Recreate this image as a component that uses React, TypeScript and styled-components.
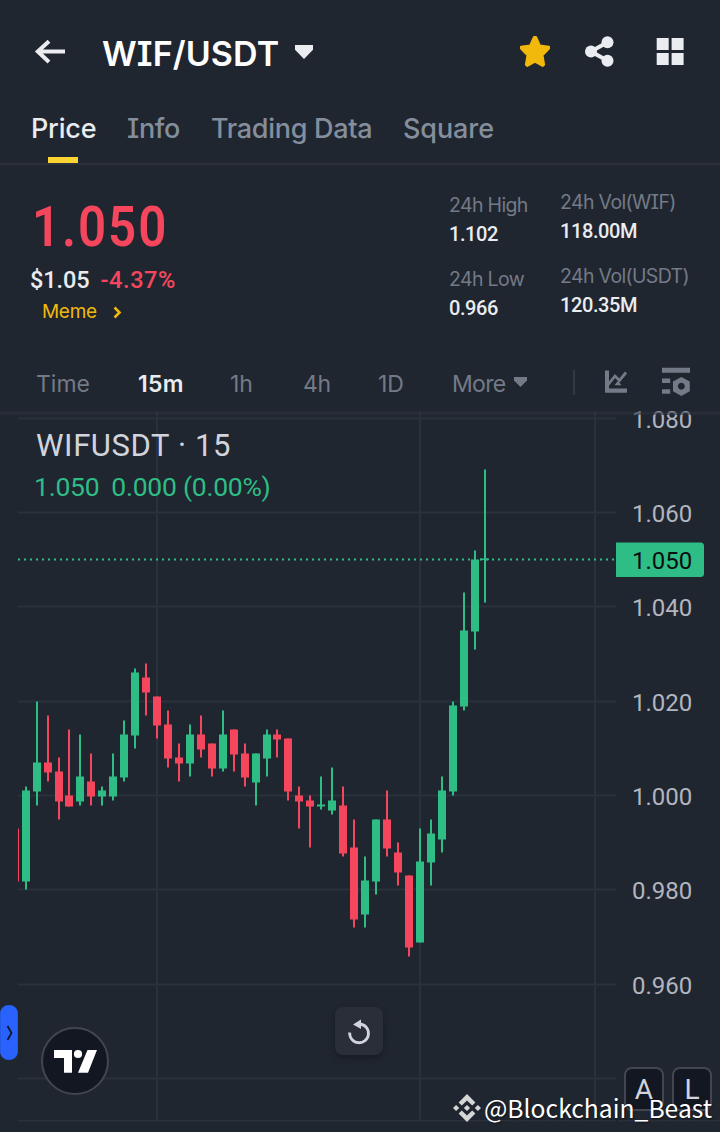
import React from 'react';
import styled, { createGlobalStyle } from 'styled-components';

const color = {
  bg: '#202630',
  text: '#eaecef',
  muted: '#848e9c',
  faint: '#747a87',
  line: '#2b303b',
  grid: '#2b313b',
  up: '#2ebd85',
  down: '#f6465d',
  gold: '#f0b90b',
  axis: '#b2b5be',
};

const GlobalStyle = createGlobalStyle`
  * { box-sizing: border-box; }
  body {
    margin: 0;
    background: ${color.bg};
    font-family: Inter, "Noto Sans", sans-serif;
    font-feature-settings: "cv08";
  }
`;

const Page = styled.main`
  width: 720px;
  height: 1132px;
  overflow: hidden;
  display: flex;
  flex-direction: column;
  background: ${color.bg};
  color: ${color.text};
`;

const TopBar = styled.header`
  height: 104px;
  padding: 0 36px 0 34px;
  display: flex;
  align-items: center;
`;

const Title = styled.h1`
  margin: 3px 0 0 36px;
  width: 193px;
  font-size: 34px;
  line-height: 40px;
  font-weight: 600;
  letter-spacing: 0.1px;
  color: #fff;
  white-space: nowrap;
`;

const Actions = styled.div`
  margin-left: auto;
  display: flex;
  align-items: center;
`;

const ActionSlot = styled.div<{ $gap: number; $lift?: number }>`
  display: flex;
  margin-right: ${(p) => p.$gap}px;
  margin-bottom: ${(p) => p.$lift ?? 0}px;
`;

const Tabs = styled.nav`
  height: 61px;
  padding-left: 31px;
  display: flex;
  border-bottom: 2px solid ${color.line};
`;

const Tab = styled.div<{ $active?: boolean; $width: number; $spacing: number }>`
  width: ${(p) => p.$width}px;
  height: 59px;
  padding-top: 8px;
  margin-right: 32px;
  display: flex;
  flex-direction: column;
  justify-content: space-between;
  align-items: flex-start;
  font-size: 27px;
  line-height: 34px;
  font-weight: 500;
  letter-spacing: ${(p) => p.$spacing}px;
  white-space: nowrap;
  color: ${(p) => (p.$active ? color.text : color.muted)};
`;

const Underline = styled.span`
  align-self: center;
  width: 30px;
  height: 6px;
  background: #fcd535;
`;

const Summary = styled.section`
  height: 188px;
  display: flex;
  justify-content: space-between;
  padding: 24px 0 0 30px;
`;

const PriceBlock = styled.div`
  display: flex;
  flex-direction: column;
`;

const LastPrice = styled.div`
  margin: 8px 0 0 2px;
  font-family: Roboto, sans-serif;
  font-size: 56px;
  line-height: 60px;
  font-weight: 600;
  letter-spacing: 2.2px;
  transform: scaleX(0.88);
  transform-origin: left center;
  color: ${color.down};
`;

const ChangeRow = styled.div`
  margin-top: 9px;
  display: flex;
  gap: 11px;
  font-family: Roboto, sans-serif;
  font-size: 23.5px;
  line-height: 28px;
  font-weight: 500;
`;

const Fiat = styled.span`
  letter-spacing: -0.1px;
  color: ${color.text};
`;

const Change = styled.span`
  color: ${color.down};
  letter-spacing: 0.6px;
`;

const Category = styled.div`
  margin: 6px 0 0 12px;
  display: flex;
  align-items: center;
  gap: 16px;
  font-size: 19px;
  line-height: 24px;
  letter-spacing: -0.3px;
  color: ${color.gold};
`;

const Stats = styled.div`
  display: flex;
`;

const StatColumn = styled.div<{ $width: number; $offset: number }>`
  width: ${(p) => p.$width}px;
  margin-top: ${(p) => p.$offset}px;
  display: flex;
  flex-direction: column;
  gap: 16px;
`;

const Stat = styled.div`
  height: 58px;
`;

const StatLabel = styled.div`
  font-size: 19.5px;
  line-height: 28px;
  letter-spacing: -0.65px;
  white-space: nowrap;
  color: ${color.faint};
`;

const StatValue = styled.div`
  font-family: Roboto, sans-serif;
  font-size: 20px;
  line-height: 30px;
  font-weight: 500;
  letter-spacing: -0.4px;
`;

const IntervalBar = styled.nav`
  height: 58px;
  padding: 3px 0 0 36px;
  display: flex;
  align-items: center;
`;

const Interval = styled.div<{ $slot: number; $active?: boolean; $spacing?: number }>`
  width: ${(p) => p.$slot}px;
  display: flex;
  align-items: center;
  gap: 9px;
  font-size: 23px;
  line-height: 30px;
  font-weight: ${(p) => (p.$active ? 600 : 400)};
  letter-spacing: ${(p) => p.$spacing ?? 0}px;
  white-space: nowrap;
  color: ${(p) => (p.$active ? color.text : color.faint)};

  > svg { margin-bottom: 4px; }
`;

const BarDivider = styled.span`
  width: 2px;
  height: 25px;
  margin: 0 30px 3px 0;
  background: #333944;
`;

const Tools = styled.div`
  display: flex;
  align-items: center;
  gap: 34px;
  margin-bottom: 3px;

  > :first-child { margin-bottom: 2px; }
`;

const ChartArea = styled.section`
  position: relative;
  height: 721px;

  > svg { display: block; }
`;

const Legend = styled.div`
  position: absolute;
  top: 17px;
  left: 36px;
  font-family: Roboto, sans-serif;
  white-space: pre;
`;

const LegendTitle = styled.div`
  font-size: 31px;
  line-height: 36px;
  letter-spacing: 0.6px;
  color: #d1d4dc;
`;

const LegendValues = styled.div`
  margin: 5px 0 0 -2px;
  display: flex;
  gap: 12px;
  font-size: 26.5px;
  line-height: 36px;
  letter-spacing: -0.25px;
  color: ${color.up};
`;

const DrawerHandle = styled.div`
  position: absolute;
  top: 594px;
  left: 0;
  width: 18px;
  height: 55px;
  display: grid;
  place-items: center;
  border: 1.5px solid #2459e2;
  border-radius: 8px;
  background: #2962ff;
`;

const BrandBadge = styled.div`
  position: absolute;
  top: 616px;
  left: 41px;
  width: 68px;
  height: 68px;
  display: grid;
  place-items: center;
  border: 2px solid #434651;
  border-radius: 50%;
  background: #131722;
`;

const ResetButton = styled.div`
  position: absolute;
  top: 596px;
  left: 335px;
  width: 48px;
  height: 48px;
  display: grid;
  place-items: center;
  border-radius: 8px;
  background: #2a2e39;
  box-shadow: 0 3px 6px rgba(0, 0, 0, 0.3);
`;

const ScaleButtons = styled.div`
  position: absolute;
  top: 656px;
  left: 624px;
  display: flex;
  gap: 8px;
`;

const ScaleButton = styled.div`
  width: 40px;
  height: 44px;
  border: 2px solid #434651;
  border-radius: 8px;
  background: #131722;
  font-family: Roboto, sans-serif;
  font-size: 28px;
  line-height: 41px;
  text-align: center;
  color: #d1d4dc;
`;

const Handle = styled.div`
  position: absolute;
  top: 678px;
  left: 453px;
  display: flex;
  align-items: center;
  gap: 3px;
  font-family: "Noto Sans CJK SC", sans-serif;
  font-size: 24.7px;
  line-height: 36px;
  white-space: nowrap;
  color: #fff;
  text-shadow: 1px 1px 2px rgba(0, 0, 0, 0.6);

  > svg { margin-top: 1px; }
`;

type Candle = [x: number, high: number, top: number, bottom: number, low: number, up: 0 | 1];

const candles: Candle[] = [
  [22, 786, 790, 882, 890, 1],
  [33, 701, 762, 792, 806, 1],
  [44, 715, 762, 773, 782, 0],
  [55, 757, 771, 802, 820, 0],
  [65, 729, 795, 807, 807, 0],
  [76, 734, 776, 802, 806, 1],
  [87, 753, 781, 797, 806, 0],
  [98, 786, 790, 797, 806, 1],
  [109, 753, 776, 797, 801, 1],
  [120, 720, 734, 778, 782, 1],
  [131, 668, 672, 736, 749, 1],
  [142, 663, 677, 693, 716, 0],
  [153, 696, 696, 726, 739, 0],
  [164, 710, 724, 759, 768, 0],
  [175, 743, 757, 764, 782, 0],
  [186, 724, 734, 764, 777, 1],
  [197, 715, 734, 750, 758, 0],
  [208, 743, 743, 769, 777, 0],
  [219, 710, 734, 769, 772, 1],
  [230, 729, 729, 755, 772, 0],
  [241, 743, 753, 778, 787, 0],
  [252, 753, 753, 783, 806, 1],
  [263, 729, 734, 759, 777, 1],
  [273, 729, 734, 740, 758, 0],
  [284, 738, 738, 792, 801, 0],
  [295, 786, 795, 802, 829, 0],
  [306, 795, 800, 807, 848, 0],
  [317, 776, 804, 807, 810, 1],
  [328, 767, 800, 811, 815, 1],
  [339, 786, 805, 854, 857, 0],
  [350, 819, 847, 920, 928, 0],
  [361, 856, 880, 915, 928, 1],
  [372, 819, 819, 882, 895, 1],
  [383, 790, 819, 849, 857, 0],
  [394, 842, 852, 873, 886, 0],
  [405, 875, 875, 948, 957, 0],
  [416, 828, 861, 943, 943, 1],
  [427, 819, 833, 863, 886, 1],
  [438, 776, 790, 840, 853, 1],
  [449, 701, 705, 792, 796, 1],
  [460, 592, 630, 707, 711, 1],
  [471, 550, 559, 632, 650, 1],
];

const levels: [y: number, label: string][] = [
  [418.5, '1.080'],
  [512.5, '1.060'],
  [606.5, '1.040'],
  [701.5, '1.020'],
  [795.5, '1.000'],
  [889.5, '0.980'],
  [984.5, '0.960'],
  [1078.5, ''],
];

const Chart = () => (
  <svg width="720" height="721" viewBox="0 411 720 721">
    <g fill={color.grid}>
      {[156, 419, 594].map((x) => (
        <rect key={x} x={x} y="411" width="2" height="708.5" />
      ))}
      {levels.map(([y]) => (
        <rect key={y} x="18" y={y - 1} width="598" height="2" />
      ))}
      <rect x="18" y="1120" width="598" height="1.5" />
      <rect x="618" y="1120" width="102" height="1.5" />
    </g>
    <line x1="18" x2="616" y1="559.4" y2="559.4" stroke={color.up} strokeWidth="2" strokeDasharray="2 4" />
    <rect x="18" y="828.5" width="1" height="53" fill={color.down} />
    {candles.map(([x, high, top, bottom, low, up]) => (
      <g key={x} fill={up ? color.up : color.down}>
        <rect x={x + 3} y={high + 0.5} width="2" height={low - high - 1} />
        <rect x={x} y={top + 0.5} width="8" height={bottom - top - 1} />
      </g>
    ))}
    <rect x="484" y="469.5" width="2" height="133" fill={color.up} />
    <rect x="480" y="558.5" width="9" height="1.6" fill={color.up} />
    <g fill={color.axis} fontFamily="Roboto, sans-serif" fontSize="24">
      {levels.map(([y, label]) => (
        <text key={y} x="632" y={y + 9}>{label}</text>
      ))}
    </g>
    <rect x="0" y="411.5" width="720" height="3.5" fill="#2b313c" fillOpacity="0.6" />
    <path d="M616 542.5h84.500a3.500 3.500 0 0 1 3.500 3.500v27.500a3.500 3.500 0 0 1-3.500 3.500H616z" fill={color.up} />
    <text x="632" y="568.5" fill="#0b0e11" fontFamily="Roboto, sans-serif" fontSize="24">1.050</text>
  </svg>
);

const BackIcon = () => (
  <svg width="32" height="26" viewBox="34 39 32 26" fill="none" stroke="#eaecef" strokeWidth="4">
    <path d="M65 51.500H38M49 41.200L37.800 51.500L49 62" />
  </svg>
);

const CaretIcon = ({ width, height, fill }: { width: number; height: number; fill: string }) => (
  <svg width={width} height={height} viewBox="0 0 18 14" preserveAspectRatio="none" fill={fill}>
    <path d="M0 0h18v4.800L9 14L0 4.800z" />
  </svg>
);

const StarIcon = () => (
  <svg width="30" height="31" viewBox="520 36 30 31" fill="#f0b90b" stroke="#f0b90b" strokeWidth="2" strokeLinejoin="round">
    <path d="M534 37h2l3.800 8.500l9.200 1.200v1.800l-6.500 6.700l1.600 9.500l-1.500 1.200l-7.600-4.300l-7.600 4.300l-1.500-1.200l1.600-9.500l-6.500-6.700v-1.800l9.200-1.200z" />
  </svg>
);

const ShareIcon = () => (
  <svg width="30" height="31" viewBox="585 36 30 31" fill="#eaecef">
    <path d="M607.500 42.300L591 51.500L607.500 60.700" fill="none" stroke="#eaecef" strokeWidth="4" />
    <circle cx="607.500" cy="42.300" r="6" />
    <circle cx="591" cy="51.500" r="6" />
    <circle cx="607.500" cy="60.700" r="6" />
  </svg>
);

const GridIcon = () => (
  <svg width="28" height="28" viewBox="656 38 28 28" fill="#eaecef">
    <path d="M656.700 38h12v12h-12zM671.600 38h12v12h-12zM656.700 53h12v12h-12zM671.600 53h12v12h-12z" />
  </svg>
);

const IndicatorIcon = () => (
  <svg width="23" height="23" viewBox="605 370 23 23" fill={color.faint}>
    <path d="M605 370.500h4v18h18v4.200h-22z" />
    <path d="M607.500 385.500L615 376L619.500 380.500L626 372.500" fill="none" stroke={color.faint} strokeWidth="2.800" />
    <path d="M614.500 385.200L618 380.800L621.500 385.200z" />
  </svg>
);

const SettingsIcon = () => (
  <svg width="29" height="30" viewBox="662 367.500 29 30" fill={color.faint}>
    <path d="M662 368.200h28v5h-28zM662 379h8.200v4.500H662zM662 389.700h8.200v4.500H662z" />
    <path fillRule="evenodd" d="M681.300 377.500l8.500 4.600v9.600l-8.500 4.900l-8.300-4.900v-9.600zM681.300 383.300a3.500 3.500 0 1 0 .01 0z" />
  </svg>
);

const BrandMark = () => (
  <svg width="44" height="24" viewBox="53 1050 44 24" fill="#fff">
    <path d="M54 1051h18v22.800h-8V1059H54zM87.500 1051H97l-9 22.800H78z" />
    <circle cx="78" cy="1055" r="4.100" />
  </svg>
);

const ResetIcon = () => (
  <svg width="24" height="28" viewBox="347 1017 24 28" fill="#d1d4dc">
    <path d="M349.700 1032.500a9.400 9.400 0 1 0 10.300-8.500" fill="none" stroke="#d1d4dc" strokeWidth="2.800" />
    <path d="M353 1024.500l8-5v9.500z" />
  </svg>
);

const DiamondLogo = () => (
  <svg width="28" height="28" viewBox="0 0 28 28" fill="#d6d6d6">
    <path d="M14 0l8.400 8.400l-3.200 3.200L14 6.400l-5.200 5.200l-3.200-3.200zM14 28l8.400-8.400l-3.200-3.200L14 21.600l-5.200-5.200l-3.200 3.200zM3.100 10.900L6.200 14l-3.100 3.100L0 14zM24.900 10.900L28 14l-3.100 3.100L21.800 14zM14 10.900l3.100 3.100l-3.100 3.100L10.900 14z" />
  </svg>
);

export default function App() {
  return (
    <Page>
      <GlobalStyle />
      <TopBar>
        <BackIcon />
        <Title>WIF/USDT</Title>
        <CaretIcon width={18} height={14} fill="#eaecef" />
        <Actions>
          <ActionSlot $gap={35} $lift={1}><StarIcon /></ActionSlot>
          <ActionSlot $gap={41} $lift={1}><ShareIcon /></ActionSlot>
          <ActionSlot $gap={0}><GridIcon /></ActionSlot>
        </Actions>
      </TopBar>
      <Tabs>
        <Tab $active $width={64} $spacing={-0.2}>Price<Underline /></Tab>
        <Tab $width={52} $spacing={-0.3}>Info</Tab>
        <Tab $width={160} $spacing={-0.3}>Trading Data</Tab>
        <Tab $width={91} $spacing={-0.1}>Square</Tab>
      </Tabs>
      <Summary>
        <PriceBlock>
          <LastPrice>1.050</LastPrice>
          <ChangeRow>
            <Fiat>$1.05</Fiat>
            <Change>-4.37%</Change>
          </ChangeRow>
          <Category>
            Meme
            <svg width="9" height="13" viewBox="0 0 9 13" fill="none" stroke="#f0b90b" strokeWidth="2.600">
              <path d="M1.500 1.500l5 5l-5 5" />
            </svg>
          </Category>
        </PriceBlock>
        <Stats>
          <StatColumn $width={111} $offset={2}>
            <Stat>
              <StatLabel>24h High</StatLabel>
              <StatValue>1.102</StatValue>
            </Stat>
            <Stat>
              <StatLabel>24h Low</StatLabel>
              <StatValue>0.966</StatValue>
            </Stat>
          </StatColumn>
          <StatColumn $width={160} $offset={-1}>
            <Stat>
              <StatLabel>24h Vol(WIF)</StatLabel>
              <StatValue>118.00M</StatValue>
            </Stat>
            <Stat>
              <StatLabel>24h Vol(USDT)</StatLabel>
              <StatValue>120.35M</StatValue>
            </Stat>
          </StatColumn>
        </Stats>
      </Summary>
      <IntervalBar>
        <Interval $slot={102}>Time</Interval>
        <Interval $slot={92} $active $spacing={0.3}>15m</Interval>
        <Interval $slot={73}>1h</Interval>
        <Interval $slot={75} $spacing={-0.4}>4h</Interval>
        <Interval $slot={74}>1D</Interval>
        <Interval $slot={121} $spacing={-0.7}>
          More
          <CaretIcon width={13} height={10} fill={color.faint} />
        </Interval>
        <BarDivider />
        <Tools>
          <IndicatorIcon />
          <SettingsIcon />
        </Tools>
      </IntervalBar>
      <ChartArea>
        <Chart />
        <Legend>
          <LegendTitle>WIFUSDT · 15</LegendTitle>
          <LegendValues>
            <span>1.050</span>
            <span>0.000 (0.00%)</span>
          </LegendValues>
        </Legend>
        <DrawerHandle>
          <svg width="7" height="16" viewBox="0 0 7 16" fill="none" stroke="#131722" strokeWidth="1.800">
            <path d="M1.500 1l4 7l-4 7" />
          </svg>
        </DrawerHandle>
        <BrandBadge><BrandMark /></BrandBadge>
        <ResetButton><ResetIcon /></ResetButton>
        <ScaleButtons>
          <ScaleButton>A</ScaleButton>
          <ScaleButton>L</ScaleButton>
        </ScaleButtons>
        <Handle>
          <DiamondLogo />
          @Blockchain_Beast
        </Handle>
      </ChartArea>
    </Page>
  );
}
